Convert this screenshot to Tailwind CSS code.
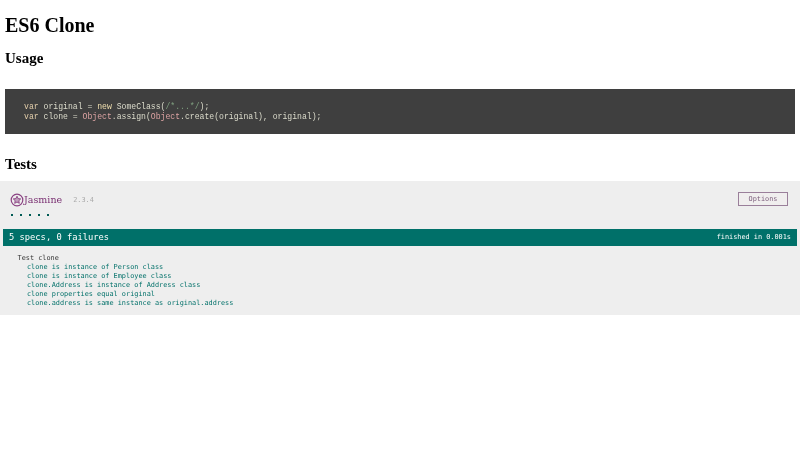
<!DOCTYPE html>
<html lang="en">
<head>
    <meta charset="UTF-8">
    <title>ES6 Clone</title>
    <script src="https://cdn.jsdelivr.net/npm/@tailwindcss/browser@4"></script>
</head>
<body class="bg-white text-black antialiased blur-[0.45px] font-['Liberation_Serif',serif]">
    <div class="h-[181px] px-[5px] flex flex-col">
        <h1 class="pt-[12px] text-[20px] leading-[26px] font-bold">ES6 Clone</h1>
        <h2 class="mt-[11px] text-[15px] leading-[18px] font-bold">Usage</h2>
        <pre class="mt-[22px] h-[45px] bg-[#3f3f3f] pl-[19px] pt-[13px] font-['DejaVu_Sans_Mono',monospace] text-[8.15px] leading-[9.5px] text-[#dcdccc]"><code><span class="text-[#e3ceab]">var</span> original = <span class="text-[#f0dfaf]">new</span> SomeClass(<span class="text-[#7f9f7f]">/*...*/</span>);
<span class="text-[#e3ceab]">var</span> clone = <span class="text-[#dca3a3]">Object</span>.assign(<span class="text-[#dca3a3]">Object</span>.create(original), original);</code></pre>
        <h2 class="mt-[21px] text-[15px] leading-[18px] font-bold">Tests</h2>
    </div>

    <div class="h-[134px] bg-[#eeeeee] px-[3px] font-['DejaVu_Sans_Mono',monospace] text-[6.875px] text-[#333333]">
        <div class="flex justify-between h-[31px] pt-[11px] pr-[6px]">
            <div class="flex items-start pl-[7px]">
                <svg class="w-[14px] h-[14px] mt-[1px]" viewBox="0 0 14 14" fill="none" stroke="#8a4182" stroke-width="1.2">
                    <circle cx="7" cy="7" r="5.8"/>
                    <path fill="#8a4182" fill-opacity="0.45" stroke-width="0.9" d="M7 3.2l1.1 2.4 2.6.3-1.9 1.8.5 2.6L7 9l-2.3 1.3.5-2.6-1.9-1.8 2.6-.3z"/>
                </svg>
                <span class="font-['DejaVu_Serif',serif] text-[9.5px] leading-[16px] text-[#7a3072]">Jasmine</span>
                <span class="ml-[11px] leading-[16px] text-[#aaaaaa]">2.3.4</span>
            </div>
            <button class="w-[50px] h-[14px] mr-[3px] border border-[#9a7f9a] bg-[#f0eeee] text-center leading-[12px] text-[#7d5f7d]">Options</button>
        </div>
        <div class="flex gap-[6.9px] pl-[8px] h-[17px] pt-[2px]">
            <span class="w-[2px] h-[2px] bg-[#005a54]"></span>
            <span class="w-[2px] h-[2px] bg-[#005a54]"></span>
            <span class="w-[2px] h-[2px] bg-[#005a54]"></span>
            <span class="w-[2px] h-[2px] bg-[#005a54]"></span>
            <span class="w-[2px] h-[2px] bg-[#005a54]"></span>
        </div>
        <div class="flex justify-between items-center h-[17px] bg-[#007069] px-[6px] text-white">
            <span class="text-[8.75px]">5 specs, 0 failures</span>
            <span>finished in 0.001s</span>
        </div>
        <div class="pt-[8px] pl-[14.5px] leading-[9px]">
            <div>Test clone</div>
            <ul class="pl-[9.4px] text-[#007069]">
                <li>clone is instance of Person class</li>
                <li>clone is instance of Employee class</li>
                <li>clone.Address is instance of Address class</li>
                <li>clone properties equal original</li>
                <li>clone.address is same instance as original.address</li>
            </ul>
        </div>
    </div>
</body>
</html>
